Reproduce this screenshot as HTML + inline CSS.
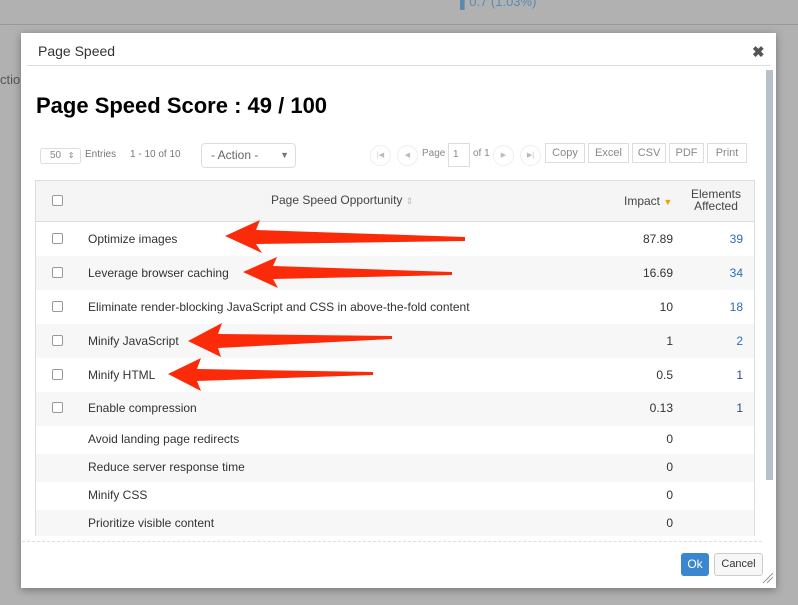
<!DOCTYPE html>
<html><head><style>
*{margin:0;padding:0;box-sizing:border-box}
body{width:798px;height:605px;background:#b1b1b1;font-family:"Liberation Sans",sans-serif;position:relative;overflow:hidden;color:#333}
.abs{position:absolute}
.dlg{left:21px;top:33px;width:755px;height:555px;background:#fff;box-shadow:0 2px 8px rgba(0,0,0,.35)}
.row{position:absolute;left:36px;width:718px;font-size:12px}
.row span{position:absolute}
.cb{position:absolute;left:16px;width:11px;height:11px;border:1px solid #999;border-radius:2px;background:#fff}
.btn{position:absolute;top:143px;height:20px;border:1px solid #ddd;font-size:11px;color:#888;text-align:center;line-height:18px;background:#fff}
.circ{position:absolute;top:145px;width:21px;height:21px;border:1px solid #eee;border-radius:50%;font-size:7px;color:#bbb;text-align:center;line-height:19px}
</style></head><body>
<div class="abs" style="left:0;top:24px;width:798px;height:1px;background:#999"></div>
<div class="abs" style="left:460px;top:-6px;font-size:13px;color:#5a8ab0">▌0.7 (1.03%)</div>
<div class="abs" style="left:0;top:72px;font-size:13px;color:#555">ctio</div>
<div class="dlg abs"></div>
<div class="abs" style="left:38px;top:43px;font-size:14px;color:#333">Page Speed</div>
<div class="abs" style="left:752px;top:43px;font-size:15px;font-weight:bold;color:#555">✖</div>
<div class="abs" style="left:27px;top:65px;width:743px;height:1px;background:#ddd"></div>
<div class="abs" style="left:766px;top:70px;width:7px;height:410px;background:#b8c0c8"></div>
<div class="abs" style="left:36px;top:93px;font-size:22px;font-weight:bold;color:#000">Page Speed Score : 49 / 100</div>
<div class="abs" style="left:40px;top:148px;width:41px;height:16px;border:1px solid #ddd;border-radius:3px;font-size:10px;color:#888;padding-left:9px;line-height:14px">50 <span style="font-size:8px;margin-left:4px">⇕</span></div>
<div class="abs" style="left:85px;top:149px;font-size:10px;color:#777">Entries</div>
<div class="abs" style="left:130px;top:149px;font-size:10px;color:#777">1 - 10 of 10</div>
<div class="abs" style="left:201px;top:143px;width:95px;height:25px;border:1px solid #ddd;border-radius:4px;font-size:12px;color:#666;padding-left:9px;line-height:23px">- Action - <span style="position:absolute;right:6px;font-size:9px;color:#777">▼</span></div>
<div class="circ" style="left:370px">|◀</div>
<div class="circ" style="left:397px">◀</div>
<div class="abs" style="left:422px;top:148px;font-size:10px;color:#888">Page</div>
<div class="abs" style="left:448px;top:143px;width:22px;height:24px;border:1px solid #ddd;font-size:10px;color:#888;padding-left:4px;line-height:22px">1</div>
<div class="abs" style="left:473px;top:148px;font-size:10px;color:#888">of 1</div>
<div class="circ" style="left:493px">▶</div>
<div class="circ" style="left:520px">▶|</div>
<div class="btn" style="left:545px;width:40px">Copy</div>
<div class="btn" style="left:588px;width:41px">Excel</div>
<div class="btn" style="left:632px;width:34px">CSV</div>
<div class="btn" style="left:669px;width:35px">PDF</div>
<div class="btn" style="left:707px;width:40px">Print</div>
<div class="abs" style="left:35px;top:180px;width:720px;height:356px;border:1px solid #ddd;border-bottom:none"></div>
<div class="row" style="top:181px;height:41px;background:#f5f5f5;border-bottom:1px solid #ddd;font-size:12px;color:#444">
<div class="cb" style="top:14px"></div>
<span style="left:235px;top:12px">Page Speed Opportunity <span style="position:relative;color:#bbb;font-size:9px">⇕</span></span>
<span style="left:588px;top:13px">Impact <span style="position:relative;color:#f0a000;font-size:9px">▼</span></span>
<span style="left:648px;width:64px;top:7px;line-height:12px;text-align:center">Elements<br>Affected</span>
</div>
<div class="row" style="top:222px;height:34px"><div class="cb" style="top:11px"></div><span style="left:52px;top:10px">Optimize images</span><span style="right:81px;top:10px">87.89</span><span style="right:11px;top:10px;color:#2a6ebb">39</span></div>
<div class="row" style="top:256px;height:34px;background:#f7f7f7"><div class="cb" style="top:11px"></div><span style="left:52px;top:10px">Leverage browser caching</span><span style="right:81px;top:10px">16.69</span><span style="right:11px;top:10px;color:#2a6ebb">34</span></div>
<div class="row" style="top:290px;height:34px"><div class="cb" style="top:11px"></div><span style="left:52px;top:10px">Eliminate render-blocking JavaScript and CSS in above-the-fold content</span><span style="right:81px;top:10px">10</span><span style="right:11px;top:10px;color:#2a6ebb">18</span></div>
<div class="row" style="top:324px;height:34px;background:#f7f7f7"><div class="cb" style="top:11px"></div><span style="left:52px;top:10px">Minify JavaScript</span><span style="right:81px;top:10px">1</span><span style="right:11px;top:10px;color:#2a6ebb">2</span></div>
<div class="row" style="top:358px;height:34px"><div class="cb" style="top:11px"></div><span style="left:52px;top:10px">Minify HTML</span><span style="right:81px;top:10px">0.5</span><span style="right:11px;top:10px;color:#2a4a7b">1</span></div>
<div class="row" style="top:392px;height:34px;background:#f7f7f7"><div class="cb" style="top:10px"></div><span style="left:52px;top:9px">Enable compression</span><span style="right:81px;top:9px">0.13</span><span style="right:11px;top:9px;color:#2a4a7b">1</span></div>
<div class="row" style="top:426px;height:28px"><span style="left:52px;top:6px">Avoid landing page redirects</span><span style="right:81px;top:6px">0</span></div>
<div class="row" style="top:454px;height:28px;background:#f7f7f7"><span style="left:52px;top:6px">Reduce server response time</span><span style="right:81px;top:6px">0</span></div>
<div class="row" style="top:482px;height:28px"><span style="left:52px;top:6px">Minify CSS</span><span style="right:81px;top:6px">0</span></div>
<div class="row" style="top:510px;height:26px;background:#f7f7f7;overflow:hidden"><span style="left:52px;top:6px">Prioritize visible content</span><span style="right:81px;top:6px">0</span></div>
<div class="abs" style="left:21px;top:536px;width:745px;height:6px;background:#fff"></div>
<div class="abs" style="left:22px;top:541px;width:740px;height:0;border-top:1px dashed #ddd"></div>
<div class="abs" style="left:681px;top:553px;width:28px;height:23px;background:#3a87cf;border-radius:3px;color:#fff;font-size:12px;text-align:center;line-height:23px">Ok</div>
<div class="abs" style="left:714px;top:553px;width:49px;height:23px;background:#f7f7f7;border:1px solid #ccc;border-radius:3px;color:#333;font-size:11px;text-align:center;line-height:21px">Cancel</div>
<svg class="abs" style="left:0;top:0" width="798" height="605">
<g fill="#fb2a08">
<polygon points="225,236 260,220 256,230 465,237 465,241 256,244 262,253"/>
<polygon points="243,272 277,257 273,266 452,272 452,275 273,279 278,288"/>
<polygon points="188,341 222,323 218,334 392,336 392,339 218,348 221,357"/>
<polygon points="168,374 201,358 197,369 373,372 373,375 197,381 201,391"/>
</g>
<path d="M763 583 L773 573 M767 583 L773 577" stroke="#999" stroke-width="1"/>
</svg>
</body></html>
